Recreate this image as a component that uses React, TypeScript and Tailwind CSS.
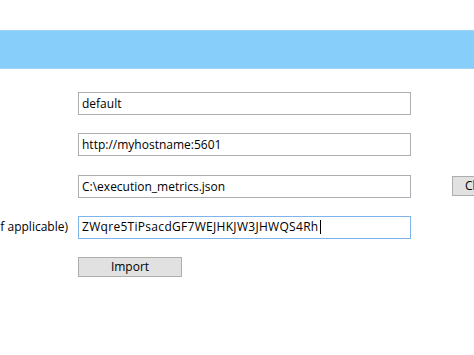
export default function App() {
  const font = "font-['Segoe_UI','Open_Sans','Noto_Sans',sans-serif]";
  const input =
    "h-[23px] w-[333px] border border-[#abadb3] bg-white px-[3px] text-[12px] leading-[21px] text-black outline-none";
  return (
    <div className={`h-[355px] w-[474px] overflow-hidden bg-white ${font}`}>
      <div className="mt-[30px] h-[39px] border-y border-[#9fd3f7] bg-[#87cefa]" />

      <div className="mt-[23px] grid grid-cols-[68px_333px_auto] items-center gap-x-[10px] gap-y-[18.25px]">
        <div />
        <input className={input} defaultValue="default" readOnly />
        <div />

        <div />
        <input className={input} defaultValue="http://myhostname:5601" readOnly />
        <div />

        <div />
        <input className={input} defaultValue="C:\execution_metrics.json" readOnly />
        <div className="flex">
          <button className="ml-[31px] h-[20px] w-[80px] shrink-0 border border-[#adadad] bg-[#e1e1e1] pl-[12px] text-left text-[12px] leading-[18px] text-black">
            Choose...
          </button>
        </div>

        <div className="flex justify-end whitespace-nowrap text-[12px] leading-[16px] text-black">
          API key (if applicable)
        </div>
        <div className="flex h-[23px] w-[333px] items-center border border-[#7eb4ea] bg-white px-[3px] text-[12px] text-black">
          <span className="tracking-[0.3px]">ZWqre5TiPsacdGF7WEJHKJW3JHWQS4Rh</span>
          <span className="ml-px h-[14px] w-px bg-black" />
        </div>
        <div />

        <div />
        <div className="flex">
          <button className="h-[20px] w-[104px] border border-[#adadad] bg-[#e1e1e1] text-[12px] leading-[18px] text-black">
            Import
          </button>
        </div>
        <div />
      </div>
    </div>
  );
}
